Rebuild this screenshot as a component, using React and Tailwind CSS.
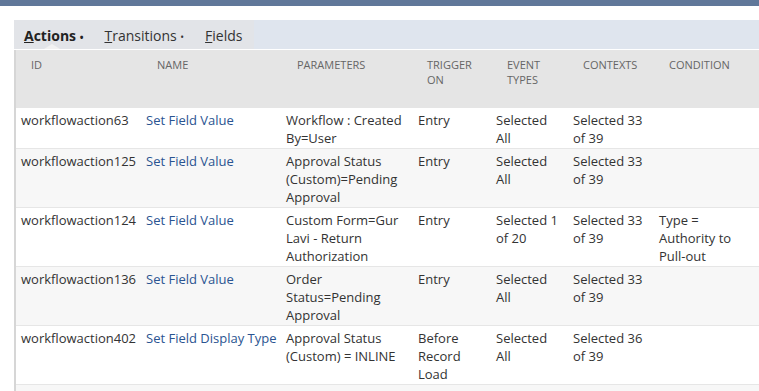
import React from "react";

const rows = [
  {
    id: "workflowaction63",
    name: "Set Field Value",
    params: "Workflow : Created By=User",
    trigger: "Entry",
    events: "Selected All",
    contexts: "Selected 33 of 39",
    condition: "",
  },
  {
    id: "workflowaction125",
    name: "Set Field Value",
    params: "Approval Status (Custom)=Pending Approval",
    trigger: "Entry",
    events: "Selected All",
    contexts: "Selected 33 of 39",
    condition: "",
  },
  {
    id: "workflowaction124",
    name: "Set Field Value",
    params: "Custom Form=Gur Lavi - Return Authorization",
    trigger: "Entry",
    events: "Selected 1 of 20",
    contexts: "Selected 33 of 39",
    condition: "Type = Authority to Pull-out",
  },
  {
    id: "workflowaction136",
    name: "Set Field Value",
    params: "Order Status=Pending Approval",
    trigger: "Entry",
    events: "Selected All",
    contexts: "Selected 33 of 39",
    condition: "",
  },
  {
    id: "workflowaction402",
    name: "Set Field Display Type",
    params: "Approval Status (Custom) = INLINE",
    trigger: "Before Record Load",
    events: "Selected All",
    contexts: "Selected 36 of 39",
    condition: "",
  },
];

const headers = [
  { label: "ID", cls: "w-[125px] pl-[15px]" },
  { label: "NAME", cls: "w-[140px] pl-[17px]" },
  { label: "PARAMETERS", cls: "w-[132px] pl-[17px]" },
  { label: "TRIGGER ON", cls: "w-[78px] pl-[15px]" },
  { label: "EVENT TYPES", cls: "w-[77px] pl-[17px]" },
  { label: "CONTEXTS", cls: "w-[86px] pl-[16px]" },
  { label: "CONDITION", cls: "w-[100px] pl-[16px]" },
];

export default function App() {
  return (
    <div className="w-[759px] h-[391px] overflow-hidden bg-white font-['Open_Sans',sans-serif] text-[#333]">
      <div className="h-[6px] bg-[#607799]" />
      <div className="pl-[14px] pt-[14px]">
        {/* tab strip */}
        <div className="flex h-[30px] bg-[#dfe5ee] border-b border-white">
          <div className="relative flex items-center gap-[21px] pt-[2px] pl-[10px] pr-[12px] bg-[#e2e4e8] text-[14px]">
            <span className="font-bold text-[#222]">
              <span className="underline">A</span>ctions <span className="text-[10px] align-middle">•</span>
            </span>
            <span className="text-[#333]">
              <span className="underline">T</span>ransitions <span className="text-[10px] align-middle">•</span>
            </span>
            <span className="text-[#333]">
              <span className="underline">F</span>ields
            </span>
            <div className="absolute left-[30px] bottom-0 w-0 h-0 border-l-[8px] border-r-[8px] border-b-[5px] border-l-transparent border-r-transparent border-b-[#f2f2f2]" />
          </div>
        </div>

        <table className="table-fixed border-collapse border-l-2 border-[#d6d6d6] w-[760px] text-[13px] leading-[18px]">
          <thead>
            <tr className="bg-[#e5e5e5] h-[58px]">
              {headers.map((h) => (
                <th
                  key={h.label}
                  className={`${h.cls} align-top text-left font-normal text-[11px] leading-[15px] text-[#666] pt-[7px] pr-[6px]`}
                >
                  {h.label}
                </th>
              ))}
              <th className="bg-[#e5e5e5]" />
            </tr>
          </thead>
          <tbody>
            {rows.map((r, i) => (
              <tr key={r.id} className={`border-b border-[#e6e6e6] ${i % 2 === 1 ? "bg-[#f7f7f7]" : "bg-white"}`}>
                <td className="align-top pt-[3px] pb-[1px] pl-[5px] pr-[3px]">{r.id}</td>
                <td className="align-top pt-[3px] pb-[1px] pl-[6px] pr-0 text-[#2a5491] whitespace-nowrap">{r.name}</td>
                <td className="align-top pt-[3px] pb-[1px] pl-[6px] pr-[4px]">{r.params}</td>
                <td className="align-top pt-[3px] pb-[1px] pl-[6px] pr-[4px]">{r.trigger}</td>
                <td className="align-top pt-[3px] pb-[1px] pl-[6px] pr-[2px]">{r.events}</td>
                <td className="align-top pt-[3px] pb-[1px] pl-[6px] pr-[4px]">{r.contexts}</td>
                <td className="align-top pt-[3px] pb-[1px] pl-[6px] pr-[4px]">{r.condition}</td>
                <td />
              </tr>
            ))}
            <tr className="bg-[#f7f7f7] h-[30px]">
              <td colSpan={8} />
            </tr>
          </tbody>
        </table>
      </div>
    </div>
  );
}
